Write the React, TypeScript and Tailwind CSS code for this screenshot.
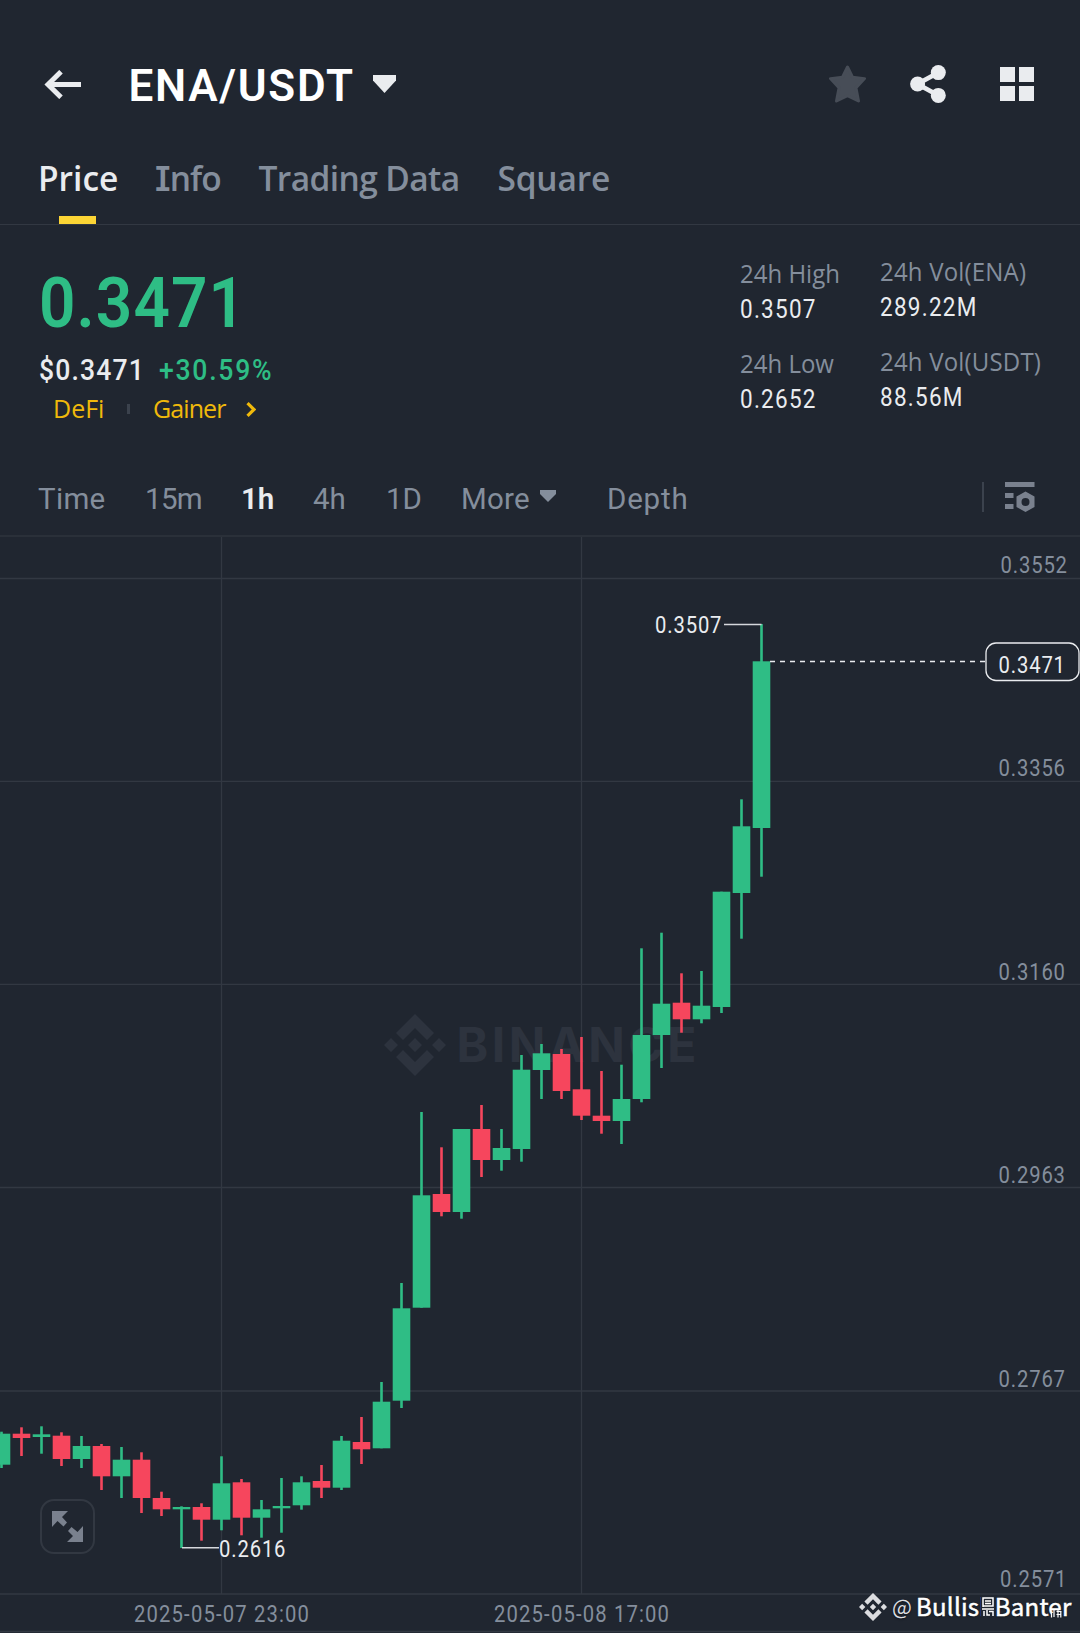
import type { ReactNode } from "react";

const GREEN = "#2fbd85";
const RED = "#f6465d";
const GRID = "#323842";

/* x centre, body top, body bottom, wick top, wick bottom, rising */
type Candle = [number, number, number, number, number, 0 | 1];

const candles: Candle[] = [
  [1.5, 1433.7, 1464.7, 1431.7, 1468, 1],
  [21.5, 1433.7, 1438, 1427.3, 1456, 0],
  [41.5, 1434.3, 1437, 1426.3, 1453.7, 1],
  [61.5, 1435.7, 1459, 1432.3, 1466, 0],
  [81.5, 1446, 1459, 1436, 1468, 1],
  [101.5, 1446, 1476.3, 1444, 1490, 0],
  [121.5, 1459.7, 1476.3, 1447, 1498, 1],
  [141.5, 1459.7, 1498, 1452.3, 1513, 0],
  [161.5, 1498, 1509.3, 1491.7, 1516, 0],
  [181.5, 1507, 1509.3, 1506.3, 1548, 1],
  [201.5, 1507, 1519.7, 1503.3, 1540.7, 0],
  [221.5, 1483.3, 1519.7, 1456.3, 1530.3, 1],
  [241.5, 1482.3, 1517.7, 1479, 1535.3, 0],
  [261.5, 1509.3, 1517.7, 1500, 1537.7, 1],
  [281.5, 1506, 1508.3, 1478, 1532.7, 1],
  [301.5, 1482.3, 1505.3, 1476.3, 1509.7, 1],
  [321.5, 1481, 1487.7, 1465, 1498, 0],
  [341.5, 1440.7, 1487.7, 1436, 1490, 1],
  [361.5, 1442, 1449.3, 1417, 1464, 0],
  [381.5, 1401.7, 1448.3, 1382, 1448.3, 1],
  [401.5, 1308.3, 1400.7, 1283, 1408, 1],
  [421.5, 1195.3, 1307.7, 1112, 1307.7, 1],
  [441.5, 1194, 1212, 1147.3, 1216.3, 0],
  [461.5, 1129, 1212, 1129, 1218.7, 1],
  [481.5, 1129, 1160, 1105, 1177, 0],
  [501.5, 1148, 1160, 1129, 1170.7, 1],
  [521.5, 1069.7, 1149, 1055, 1161.7, 1],
  [541.5, 1053.3, 1070, 1044, 1099, 1],
  [561.5, 1054, 1091, 1049, 1099, 0],
  [581.5, 1089.3, 1115.7, 1037, 1120, 0],
  [601.5, 1115.7, 1121, 1071, 1133.7, 0],
  [621.5, 1099, 1121, 1064.7, 1144, 1],
  [641.5, 1035, 1099, 948.3, 1102.3, 1],
  [661.5, 1003.7, 1035, 932.7, 1068, 1],
  [681.5, 1002.7, 1019.3, 973.3, 1032.7, 0],
  [701.5, 1005.7, 1019.3, 971, 1023.3, 1],
  [721.5, 891.7, 1007, 891.7, 1013, 1],
  [741.5, 826.3, 893, 799.3, 938.7, 1],
  [761.5, 661.3, 828, 624, 876.7, 1],
];

const gridRows = [578.5, 781.3, 984.4, 1187.5, 1391, 1594];

/* label, x, baseline */
const priceLabels: [string, number, number][] = [
  ["0.3552", 1000.5, 573],
  ["0.3356", 998.5, 776.3],
  ["0.3160", 998.5, 980],
  ["0.2963", 998.5, 1183.3],
  ["0.2767", 998.5, 1386.5],
  ["0.2571", 1000, 1587],
];

function BinanceMark({ className }: { className: string }) {
  return (
    <svg viewBox="0 0 62 62" className={className} fill="currentColor">
      <path d="M31 0 50 19 43 26 31 14 19 26 12 19Z" />
      <path d="M31 62 50 43 43 36 31 48 19 36 12 43Z" />
      <path d="M31 24 38 31 31 38 24 31ZM7 24 14 31 7 38 0 31ZM55 24 62 31 55 38 48 31Z" />
    </svg>
  );
}

function Num({ className, children }: { className: string; children: ReactNode }) {
  return (
    <span className={"block origin-left scale-x-[0.9] whitespace-nowrap font-['Roboto',sans-serif] " + className}>
      {children}
    </span>
  );
}

/* Condensed figures with open spacing, drawn from x over the given width */
function Figure({ x, y, width, children }: { x: number; y: number; width: number; children: string }) {
  return (
    <text transform={`translate(${x} ${y}) scale(0.88 1)`} textLength={width / 0.88}>
      {children}
    </text>
  );
}

function Header() {
  return (
    <header className="flex h-[144px] items-center pt-[24px] pl-[44px]">
      <svg className="h-[29px] w-[37px] shrink-0" viewBox="0 0 37 29" fill="none" stroke="#eaecef" strokeWidth="5">
        <path d="M37 14.500H6M17 1.700 4 14.500 17 27.300" />
      </svg>
      <h1 className="mt-[3px] ml-[47.500px] w-[244px] whitespace-nowrap font-['Roboto',sans-serif] text-[44px] leading-none font-semibold tracking-[1.7px] text-white">
        ENA/USDT
      </h1>
      <svg className="h-[18px] w-[23px] shrink-0" viewBox="0 0 23 18" fill="#eaecef">
        <path d="M0 0H23V5.500L11.500 18 0 5.500Z" />
      </svg>
      <svg className="ml-[433.500px] h-[38px] w-[37px] shrink-0" viewBox="0 0 37 39" preserveAspectRatio="none" fill="#474d57" stroke="#474d57" strokeWidth="3" strokeLinejoin="round">
        <path d="M18.500 2 23.500 12.500 35.500 14 27 23.500 29.500 37 18.500 31.500 7.500 37 10 23.500 1.500 14 13.500 12.500Z" />
      </svg>
      <svg className="ml-[44px] h-[38px] w-[36px] shrink-0" viewBox="0 0 36 38" fill="#eaecef">
        <path d="M28.500 7.500 7.500 19 28.500 30.500" fill="none" stroke="#eaecef" strokeWidth="4.800" />
        <circle cx="28.300" cy="7.600" r="7.500" />
        <circle cx="7.600" cy="19" r="7.500" />
        <circle cx="28.300" cy="30.400" r="7.500" />
      </svg>
      <div className="ml-[54px] grid h-[34px] w-[34px] grid-cols-2 gap-[4px]">
        <i className="bg-[#eaecef]" />
        <i className="bg-[#eaecef]" />
        <i className="bg-[#eaecef]" />
        <i className="bg-[#eaecef]" />
      </div>
    </header>
  );
}

function Tabs() {
  return (
    <nav className="flex h-[81px] border-b border-[#323842] pl-[38px] font-['Open_Sans',sans-serif] text-[33.500px] leading-[69px] font-semibold whitespace-nowrap text-[#848e9c]">
      <div className="relative w-[117px] text-[#eaecef]">
        <span className="block">Price</span>
        <i className="absolute top-[72px] left-[21px] h-[8px] w-[37px] bg-[#fcd535]" />
      </div>
      <div className="w-[103.500px] tracking-[-0.900px]">
        <span className="font-['Inter',sans-serif] [font-feature-settings:'cv08']">I</span>
        <span>nfo</span>
      </div>
      <div className="w-[239px] tracking-[-0.600px]">Trading Data</div>
      <div className="tracking-[-0.200px]">Square</div>
    </nav>
  );
}

function Stat({ label, value }: { label: string; value: string }) {
  return (
    <div className="h-[90px] whitespace-nowrap">
      <div className="h-[36px] origin-left scale-x-[0.96] font-['Open_Sans',sans-serif] text-[25px] leading-[35px] text-[#848e9c]">
        {label}
      </div>
      <Num className="text-[25px] leading-[36px] tracking-[1.400px] text-[#eaecef]">{value}</Num>
    </div>
  );
}

function Summary() {
  return (
    <section className="flex h-[240px]">
      <div className="w-[740px] pl-[39px]">
        <Num className="mt-[35px] h-[86px] text-[71px] leading-[86px] font-semibold tracking-[1.200px] text-[#2ebd85]">0.3471</Num>
        <div className="mt-[3px] flex h-[43px] items-center text-[29.500px]">
          <div className="w-[119.500px] text-[#eaecef]">
            <Num className="font-medium tracking-[1.300px]">$0.3471</Num>
          </div>
          <Num className="font-medium tracking-[1.950px] text-[#2ebd85]">+30.59%</Num>
        </div>
        <div className="-mt-px flex h-[36px] items-center pl-[14px] font-['Open_Sans',sans-serif] text-[25px] text-[#f0b90b]">
          <span className="w-[74px]">DeFi</span>
          <i className="h-[10px] w-[3px] bg-[#3b424d]" />
          <span className="ml-[23px] w-[93px] tracking-[-0.900px]">Gainer</span>
          <svg className="h-[15px] w-[10px]" viewBox="0 0 10 15" fill="none" stroke="#f0b90b" strokeWidth="3.200">
            <path d="M1.500 1.200 8 7.500 1.500 13.800" />
          </svg>
        </div>
      </div>
      <div className="w-[139.500px] pt-[31px]">
        <Stat label="24h High" value="0.3507" />
        <Stat label="24h Low" value="0.2652" />
      </div>
      <div className="pt-[29px] tracking-[0.200px]">
        <Stat label="24h Vol(ENA)" value="289.22M" />
        <Stat label="24h Vol(USDT)" value="88.56M" />
      </div>
    </section>
  );
}

function Intervals() {
  return (
    <div className="flex h-[72px] items-center border-b-2 border-[#2a3039] pb-[6px] pl-[38px] font-['Roboto',sans-serif] text-[29.500px] whitespace-nowrap text-[#848e9c] [&>span]:pt-[5px]">
      <span className="w-[107px] tracking-[0.300px]">Time</span>
      <span className="w-[96px] tracking-[-0.700px]">15m</span>
      <span className="w-[72px] font-semibold text-[#eaecef]">1h</span>
      <span className="w-[73px]">4h</span>
      <span className="w-[75px]">1D</span>
      <span className="w-[79px] tracking-[0.200px]">More</span>
      <svg className="h-[12px] w-[16px] -translate-y-px" viewBox="0 0 16 12" fill="#848e9c">
        <path d="M0 0H16V4L8 12 0 4Z" />
      </svg>
      <span className="ml-[51px] w-[375px] tracking-[0.800px]">Depth</span>
      <i className="h-[30px] w-[2px] bg-[#3b424d]" />
      <svg className="ml-[21px] h-[30px] w-[30px]" viewBox="0 0 30 30" fill="#7a818e">
        <path d="M0 0H29.500V5H0ZM0 11H8.500V16H0ZM0 22H8.500V27H0Z" />
        <path fillRule="evenodd" d="M20.500 9.500 29.500 14.500V25L20.500 30 11.500 25V14.500ZM20.500 16A4 4 0 1 0 20.500 24 4 4 0 1 0 20.500 16Z" />
      </svg>
    </div>
  );
}

function Chart() {
  return (
    <section className="relative h-[1096px] overflow-hidden">
      <svg className="block h-[1096px] w-[1080px] font-['Roboto',sans-serif] text-[23px]" viewBox="0 537 1080 1096">
        <g stroke={GRID} strokeWidth="1.300">
          {gridRows.map((y) => (
            <path key={y} d={`M0 ${y}H1080`} />
          ))}
          <path d="M221.500 537V1594M581.500 537V1594M0 1631.500H1080" />
        </g>
        <g fill="#2d333e">
          <path d="M415 1014 434 1033 427 1040 415 1028 403 1040 396 1033Z" />
          <path d="M415 1076 434 1057 427 1050 415 1062 403 1050 396 1057Z" />
          <path d="M415 1038 422 1045 415 1052 408 1045ZM391 1038 398 1045 391 1052 384 1045ZM439 1038 446 1045 439 1052 432 1045Z" />
          <text x="456.500" y="1062" textLength="240" className="font-['Inter',sans-serif] text-[48px] font-bold">
            BINANCE
          </text>
        </g>
        {candles.map(([x, top, bottom, high, low, up]) => (
          <g key={x} fill={up ? GREEN : RED}>
            <rect x={x - 1.3} y={high} width="2.600" height={low - high} />
            <rect x={x - 8.8} y={top} width="17.600" height={bottom - top} />
          </g>
        ))}
        <path d="M724 624.500H761.500M182 1547.700H219" stroke="#d5d8dc" strokeWidth="1.500" />
        <path d="M770 661.500H985" stroke="#eaecef" strokeWidth="1.300" strokeDasharray="5 5" />
        <rect x="986" y="643" width="93" height="37.500" rx="10" fill="#202630" stroke="#eaecef" strokeWidth="1.300" />
        <g fill="#eaecef">
          <Figure x={655} y={633} width={66.5}>0.3507</Figure>
          <Figure x={219} y={1557} width={66.5}>0.2616</Figure>
          <Figure x={998.5} y={673} width={66.5}>0.3471</Figure>
        </g>
        <g fill="#848e9c">
          {priceLabels.map(([label, x, y]) => (
            <Figure key={label} x={x} y={y} width={66.5}>
              {label}
            </Figure>
          ))}
          <Figure x={134} y={1622} width={175}>2025-05-07 23:00</Figure>
          <Figure x={494} y={1622} width={175}>2025-05-08 17:00</Figure>
        </g>
        <rect x="41" y="1500" width="53" height="53" rx="13" fill="#202630" stroke="#323842" strokeWidth="2" />
        <path
          d="M52 1511H68L62 1517 67 1522.500 63.500 1526.500 57.500 1521 52 1527ZM83 1542H67L73 1536 68 1531 71.500 1527 77.500 1532 83 1526Z"
          fill="#7a818e"
        />
      </svg>
      <div className="absolute top-[1053px] left-[859px] flex h-[34px] items-center whitespace-nowrap text-white [text-shadow:0_1px_2px_#0008]">
        <BinanceMark className="h-[28px] w-[28px] text-[#dcdde0]" />
        <span className="-mt-[2px] ml-[5px] w-[24px] font-['Noto_Sans_CJK_SC',sans-serif] text-[21px] leading-none text-[#dcdde0]">@</span>
        <span className="-mt-[2px] font-['Noto_Sans_CJK_SC',sans-serif] text-[24px] leading-none tracking-[0.250px] [-webkit-text-stroke:0.5px_#fff]">
          Bullish<span className="[word-spacing:-5px]"> Banter</span>
        </span>
        <svg className="absolute top-[7px] left-[122px] h-[20px] w-[14px]" viewBox="0 0 14 20">
          <path d="M0 0H14V20H0Z" fill="#202630" />
          <path d="M2 10V1H12V9H2M4 4H10M4 6.500H10M1 12H13M3 14V19M6 13V18H9M8 14.500H12V19" fill="none" stroke="#fff" strokeWidth="1.500" />
        </svg>
        <svg className="absolute top-[18px] left-[191px] h-[10px] w-[12px]" viewBox="0 0 12 10">
          <path d="M1 5H12V10H1Z" fill="#202630" />
          <path d="M1.500 4V9.500M4 2V9M6.500 3.500H11.500M6.500 6.500H11M8 2V9.500M10.800 4V9.500" fill="none" stroke="#fff" strokeWidth="1.200" />
        </svg>
      </div>
    </section>
  );
}

export default function App() {
  return (
    <main className="h-[1633px] w-[1080px] overflow-hidden bg-[#202630]">
      <Header />
      <Tabs />
      <Summary />
      <Intervals />
      <Chart />
    </main>
  );
}
